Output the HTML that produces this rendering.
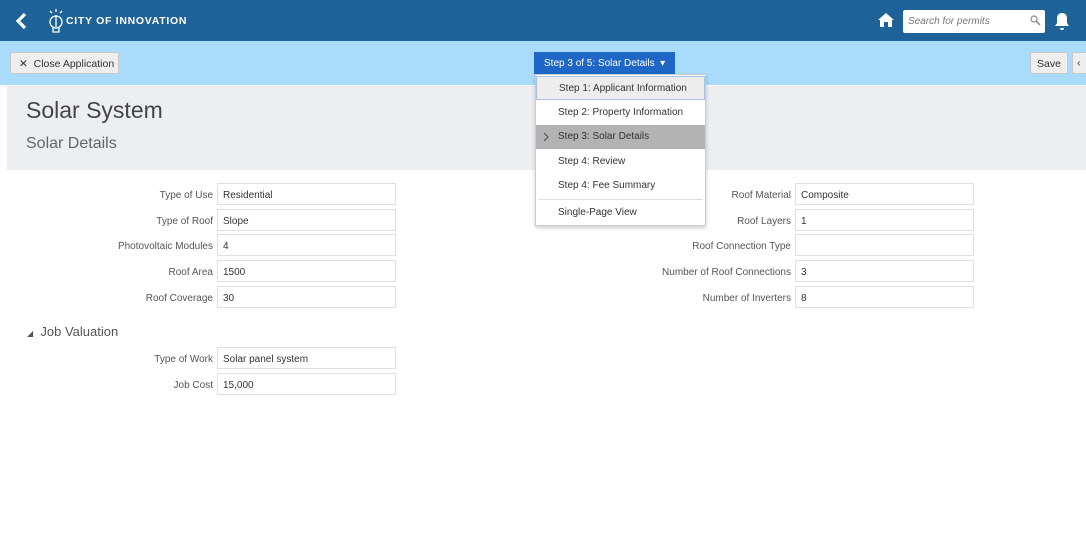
<!DOCTYPE html>
<html><head><style>
body{margin:0;width:1086px;height:547px;overflow:hidden;background:#fff;font-family:"Liberation Sans",sans-serif;position:relative}
.a{position:absolute}
.hdr{left:0;top:0;width:1086px;height:41px;background:#1d6298}
.bar{left:0;top:41px;width:1086px;height:44px;background:#a9dbfb}
.gray{left:7px;top:86px;width:1079px;height:84px;background:#eceef2}
.btn{background:#eeeeee;border:1px solid #c9c9c9;font-size:10.5px;color:#333;box-sizing:border-box;line-height:20px;border-radius:2px}
.lbl{font-size:10px;color:#555;text-align:right;width:200px}
.inp{width:179px;height:22px;border:1px solid #e0e0e0;box-sizing:border-box;font-size:10px;color:#333;padding-left:5px;line-height:23px}
.mi{left:536px;width:169px;height:24px;font-size:10px;color:#333;line-height:24px;padding-left:22px;box-sizing:border-box}
</style></head><body>
<div class="a hdr"></div>
<svg class="a" style="left:15px;top:12px" width="14" height="18" viewBox="0 0 14 18"><path d="M10 2L3 9l7 7" fill="none" stroke="#fff" stroke-width="3.2"/></svg>
<svg class="a" style="left:45px;top:7px" width="22" height="28" viewBox="0 0 22 28"><g fill="none" stroke="#fff" stroke-width="1.3"><circle cx="11" cy="15" r="6"/><path d="M8 21v4h6v-4M11 8v12M11 2v3M5 4l2 2M17 4l-2 2"/></g></svg>
<div class="a" style="left:66px;top:15px;color:#fff;font-size:10.5px;font-weight:bold;letter-spacing:0.7px">CITY OF INNOVATION</div>
<svg class="a" style="left:877px;top:12px" width="18" height="16" viewBox="0 0 18 16"><path d="M9 1L1 8h2v7h4v-5h4v5h4V8h2z" fill="#fff"/></svg>
<div class="a" style="left:903px;top:10px;width:142px;height:23px;background:#fff;border-radius:2px;font-size:10px;font-style:italic;color:#777;line-height:24px;padding-left:5px;box-sizing:border-box">Search for permits</div>
<svg class="a" style="left:1030px;top:15px" width="11" height="11" viewBox="0 0 11 11"><circle cx="4" cy="4" r="3" fill="none" stroke="#888" stroke-width="1.2"/><path d="M6 6l4 4" stroke="#888" stroke-width="1.5"/></svg>
<svg class="a" style="left:1054px;top:12px" width="16" height="19" viewBox="0 0 16 19"><path d="M8 1c-3 0-5 2-5 5v5l-2 3h14l-2-3V6c0-3-2-5-5-5zM6 16a2 2 0 004 0z" fill="#fff"/></svg>
<div class="a bar"></div>
<div class="a btn" style="left:10px;top:52px;width:109px;height:22px;padding-left:8px;line-height:22px">✕&nbsp; Close Application</div>
<div class="a" style="left:534px;top:52px;width:141px;height:22px;background:#1f67c6;color:#fff;font-size:10px;line-height:23px;padding-left:10px;box-sizing:border-box">Step 3 of 5: Solar Details &nbsp;▾</div>
<div class="a btn" style="left:1030px;top:52px;width:38px;height:22px;text-align:center;line-height:22px">Save</div>
<div class="a btn" style="left:1072px;top:52px;width:20px;height:22px;padding-left:4px">‹</div>
<div class="a gray"></div>
<div class="a" style="left:26px;top:97px;font-size:23px;color:#444">Solar System</div>
<div class="a" style="left:26px;top:135px;font-size:16px;color:#666">Solar Details</div>
<div class="a" style="left:535px;top:74px;width:171px;height:152px;background:#fff;border:1px solid #ccc;box-shadow:0 2px 4px rgba(0,0,0,.2);box-sizing:border-box"></div>
<div class="a mi" style="top:76px;background:#ededed;border:1px solid #a8c2e6;line-height:23px">Step 1: Applicant Information</div>
<div class="a mi" style="top:101px">Step 2: Property Information</div>
<div class="a mi" style="top:125px;background:#b3b3b3">Step 3: Solar Details</div>
<svg class="a" style="left:543px;top:132px" width="7" height="10" viewBox="0 0 7 10"><path d="M1 1l4 4-4 4" fill="none" stroke="#555" stroke-width="1.2"/></svg>
<div class="a mi" style="top:150px">Step 4: Review</div>
<div class="a mi" style="top:174px">Step 4: Fee Summary</div>
<div class="a" style="left:538px;top:199px;width:165px;height:1px;background:#ddd"></div>
<div class="a mi" style="top:201px">Single-Page View</div>

<div class="a lbl" style="left:13px;top:190px">Type of Use</div><div class="a inp" style="left:217px;top:183px">Residential</div>
<div class="a lbl" style="left:13px;top:216px">Type of Roof</div><div class="a inp" style="left:217px;top:209px">Slope</div>
<div class="a lbl" style="left:13px;top:241px">Photovoltaic Modules</div><div class="a inp" style="left:217px;top:234px">4</div>
<div class="a lbl" style="left:13px;top:267px">Roof Area</div><div class="a inp" style="left:217px;top:260px">1500</div>
<div class="a lbl" style="left:13px;top:293px">Roof Coverage</div><div class="a inp" style="left:217px;top:286px">30</div>

<div class="a lbl" style="left:591px;top:190px">Roof Material</div><div class="a inp" style="left:795px;top:183px">Composite</div>
<div class="a lbl" style="left:591px;top:216px">Roof Layers</div><div class="a inp" style="left:795px;top:209px">1</div>
<div class="a lbl" style="left:591px;top:241px">Roof Connection Type</div><div class="a inp" style="left:795px;top:234px"></div>
<div class="a lbl" style="left:591px;top:267px">Number of Roof Connections</div><div class="a inp" style="left:795px;top:260px">3</div>
<div class="a lbl" style="left:591px;top:293px">Number of Inverters</div><div class="a inp" style="left:795px;top:286px">8</div>

<div class="a" style="left:27px;top:324px;font-size:13px;color:#555"><span style="font-size:8px">◢</span>&nbsp; Job Valuation</div>
<div class="a lbl" style="left:13px;top:354px">Type of Work</div><div class="a inp" style="left:217px;top:347px">Solar panel system</div>
<div class="a lbl" style="left:13px;top:380px">Job Cost</div><div class="a inp" style="left:217px;top:373px">15,000</div>
</body></html>
